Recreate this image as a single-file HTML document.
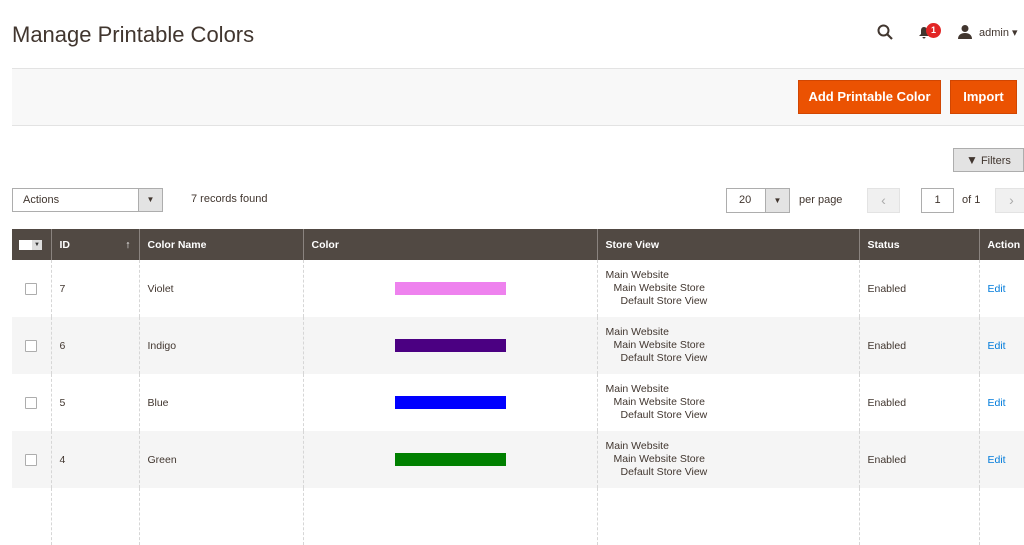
<!DOCTYPE html><html><head><style>
*{box-sizing:border-box;margin:0;padding:0}
body{width:1024px;height:499px;overflow:hidden;background:#fff;font-family:"Liberation Sans",sans-serif;color:#41362f;position:relative;font-size:11px}
.a{position:absolute}
h1{position:absolute;left:12px;top:22px;font-size:22px;font-weight:400;color:#41362f}
.bar{position:absolute;left:12px;top:68px;width:1012px;height:58px;background:#f8f8f8;border-top:1px solid #e3e3e3;border-bottom:1px solid #e3e3e3}
.btn{position:absolute;top:80px;height:34px;background:#eb5202;border:1px solid #d14602;color:#fff;font-weight:bold;font-size:13px;line-height:32px;text-align:center}
table{position:absolute;left:12px;top:229px;border-collapse:collapse;width:1020px}
th{background:#514943;color:#fff;font-size:10.5px;text-align:left;height:31px;padding:0 8px;border-left:1px solid #8a837f;font-weight:bold}
td{height:57px;padding:0 8px;border-left:1px dashed #d6d6d6;font-size:10.5px;vertical-align:middle}
tr:nth-child(odd) td{background:#f5f5f5}
.cb{width:12px;height:12px;border:1px solid #adadad;background:#fff;border-radius:1px;margin-left:5px}
.sw{width:111px;height:13px;margin-left:83px}
.sv{line-height:13px}
.sv div:nth-child(2){padding-left:8px}
.sv div:nth-child(3){padding-left:15px}
a{color:#007bdb;text-decoration:none}
</style></head><body>
<h1>Manage Printable Colors</h1>
<svg class="a" style="left:877px;top:24px" width="16" height="16" viewBox="0 0 16 16"><circle cx="6.5" cy="6.5" r="5" fill="none" stroke="#41362f" stroke-width="2"/><line x1="10" y1="10" x2="15" y2="15" stroke="#41362f" stroke-width="2.2"/></svg>
<svg class="a" style="left:918px;top:26px" width="12" height="13" viewBox="0 0 12 13"><path d="M6 1C3.5 1 3 3 3 5v3L1 10h10L9 8V5C9 3 8.5 1 6 1zM4.5 11h3a1.5 1.5 0 0 1-3 0z" fill="#41362f"/></svg>
<div class="a" style="left:926px;top:23px;width:15px;height:15px;border-radius:50%;background:#e22626;color:#fff;font-size:9px;font-weight:bold;text-align:center;line-height:15px">1</div>
<svg class="a" style="left:958px;top:24px" width="14" height="15" viewBox="0 0 14 15"><circle cx="7" cy="4.5" r="3.5" fill="#41362f"/><path d="M0 15c0-4 3-6 7-6s7 2 7 6z" fill="#41362f"/></svg>
<div class="a" style="left:979px;top:26px;font-size:11px;color:#41362f">admin ▾</div>
<div class="bar"></div>
<div class="btn" style="left:798px;width:143px">Add Printable Color</div>
<div class="btn" style="left:950px;width:67px">Import</div>
<div class="a" style="left:953px;top:148px;width:71px;height:24px;background:#e3e3e3;border:1px solid #adadad;font-size:11px;line-height:22px;padding-left:12px"><span style="font-size:12px">▼</span> Filters</div>
<div class="a" style="left:12px;top:188px;width:151px;height:24px;border:1px solid #adadad;font-size:11px;line-height:22px;padding-left:10px;color:#41362f">Actions<div class="a" style="right:0;top:0;width:24px;height:22px;background:#e3e3e3;border-left:1px solid #adadad;text-align:center;font-size:8px">▼</div></div>
<div class="a" style="left:191px;top:193px;font-size:11px">7 records found</div>
<div class="a" style="left:726px;top:188px;width:64px;height:25px;border:1px solid #adadad;font-size:11px;line-height:23px;padding-left:12px">20<div class="a" style="right:0;top:0;width:24px;height:23px;background:#e3e3e3;border-left:1px solid #adadad;text-align:center;font-size:8px">▼</div></div>
<div class="a" style="left:799px;top:194px;font-size:11px">per page</div>
<div class="a" style="left:867px;top:188px;width:33px;height:25px;background:#f0f0f0;border:1px solid #e3e3e3;color:#aaa;text-align:center;line-height:23px;font-size:14px">‹</div>
<div class="a" style="left:921px;top:188px;width:33px;height:25px;border:1px solid #adadad;text-align:center;line-height:23px;font-size:11px">1</div>
<div class="a" style="left:962px;top:194px;font-size:11px">of 1</div>
<div class="a" style="left:995px;top:188px;width:33px;height:25px;background:#f0f0f0;border:1px solid #e3e3e3;color:#aaa;text-align:center;line-height:23px;font-size:14px">›</div>
<table>
<tr><th style="width:39px;border-left:none;padding:0 7px"><div style="width:23px;height:10px;background:#fff;position:relative"><div style="position:absolute;right:0;top:0;width:10px;height:10px;background:#ddd;font-size:6px;color:#333;text-align:center;line-height:10px">▼</div></div></th><th style="width:88px">ID<span style="float:right;font-weight:normal">↑</span></th><th style="width:164px">Color Name</th><th style="width:294px">Color</th><th style="width:262px">Store View</th><th style="width:120px">Status</th><th>Action</th></tr>
<tr><td style="border-left:none"><div class="cb"></div></td><td>7</td><td>Violet</td><td><div class="sw" style="background:#ee82ee"></div></td><td class="sv"><div>Main Website</div><div>Main Website Store</div><div>Default Store View</div></td><td>Enabled</td><td><a>Edit</a></td></tr>
<tr><td style="border-left:none"><div class="cb"></div></td><td>6</td><td>Indigo</td><td><div class="sw" style="background:#4b0082"></div></td><td class="sv"><div>Main Website</div><div>Main Website Store</div><div>Default Store View</div></td><td>Enabled</td><td><a>Edit</a></td></tr>
<tr><td style="border-left:none"><div class="cb"></div></td><td>5</td><td>Blue</td><td><div class="sw" style="background:#0000ff"></div></td><td class="sv"><div>Main Website</div><div>Main Website Store</div><div>Default Store View</div></td><td>Enabled</td><td><a>Edit</a></td></tr>
<tr><td style="border-left:none"><div class="cb"></div></td><td>4</td><td>Green</td><td><div class="sw" style="background:#008000"></div></td><td class="sv"><div>Main Website</div><div>Main Website Store</div><div>Default Store View</div></td><td>Enabled</td><td><a>Edit</a></td></tr>
<tr><td style="border-left:none"></td><td></td><td></td><td></td><td></td><td></td><td></td></tr>
</table>
</body></html>
